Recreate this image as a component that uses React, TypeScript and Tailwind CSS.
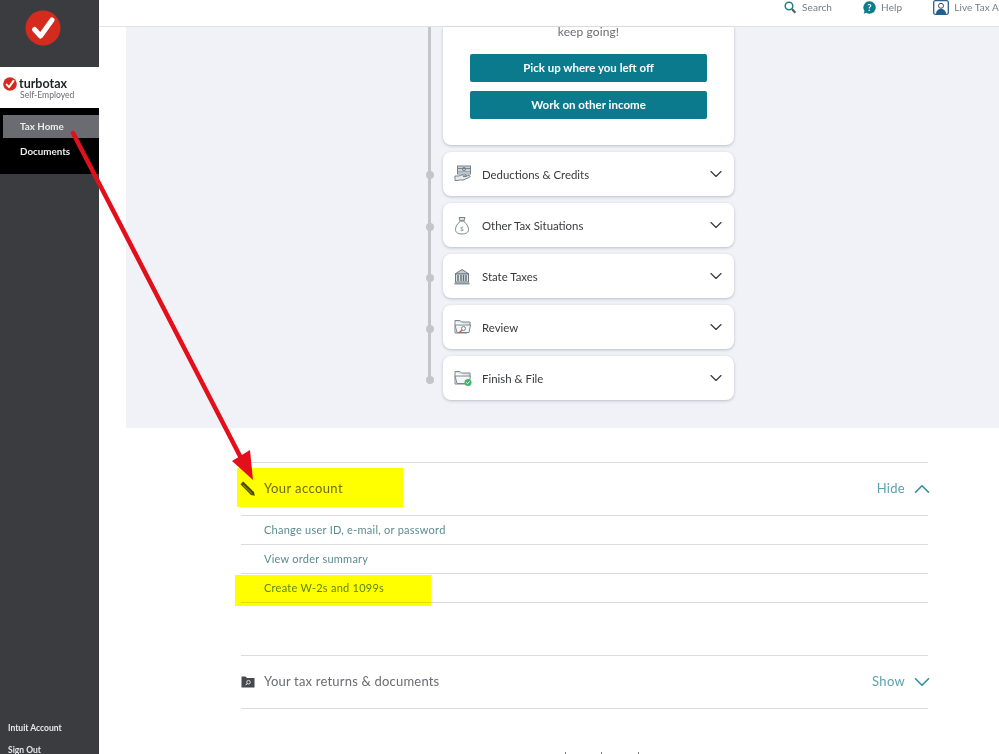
import { ChevronDown, ChevronUp } from 'lucide-react';
import type { ReactNode } from 'react';

const RED = '#d52b1f';

function Checkmark({ size }: { size: number }) {
  return (
    <svg width={size} height={size} viewBox="0 0 36 36" className="shrink-0">
      <circle cx="18" cy="18" r="17.5" fill={RED} />
      <path d="M9.5 19.5 L15.5 26 L27 10" fill="none" stroke="#fff" strokeWidth="5" strokeLinecap="round" strokeLinejoin="round" />
    </svg>
  );
}

function MoneyIcon() {
  return (
    <svg width="18" height="18" viewBox="0 0 18 18" fill="none" stroke="#76838c" strokeWidth="1">
      <rect x="3.5" y="1" width="13" height="6" fill="#c9d2d6" />
      <circle cx="10" cy="4" r="1.6" />
      <rect x="3.5" y="3.5" width="13" height="5.5" />
      <path d="M1 11h4l2-1h5c1 0 1 1.5 0 1.5H9l6-1c1.5 0 1.5 1.5 0 2l-6 2.5H5l-1 .5H1z" fill="#e6eaec" />
    </svg>
  );
}

function BagIcon() {
  return (
    <svg width="16" height="19" viewBox="0 0 16 19" fill="none" stroke="#76838c" strokeWidth="1">
      <path d="M5 1.5h6L9.8 5H6.2z" fill="#dbe2e4" />
      <path d="M5.5 5h5M6 5.5C3 8 1.5 11 1.5 13.5c0 3 2.5 4.5 6.500 4.5s6.500-1.500 6.500-4.500C14.500 11 13 8 10 5.500" fill="#ffffff" />
      <text x="8" y="15" fontSize="6.5" textAnchor="middle" stroke="none" fill="#5f8f85" fontFamily="Lato, sans-serif">$</text>
    </svg>
  );
}

function BankIcon() {
  return (
    <svg width="16" height="17" viewBox="0 0 16 17" fill="none" stroke="#6d7a83" strokeWidth="1">
      <path d="M1 6 8 1.5 15 6z" fill="#c3ccd0" />
      <rect x="1.5" y="6" width="13" height="8" fill="#dde3e6" />
      <path d="M4 7v6M7 7v6M9.5 7v6M12 7v6" strokeWidth="1.4" stroke="#5f6c75" />
      <path d="M0.5 15.5h15" strokeWidth="2" stroke="#8a969d" />
    </svg>
  );
}

function FolderIcon({ badge }: { badge: 'search' | 'check' }) {
  return (
    <svg width="18" height="16" viewBox="0 0 18 16" fill="none" stroke="#7b878f" strokeWidth="1">
      <path d="M1 3V1.500h5L7.500 3H16v3" fill="#dfe4e6" />
      <path d="M1 3v11h12" />
      <path d="M1 6h15.500L15 13.500H3z" fill="#f5f6f7" />
      {badge === 'search' ? (
        <>
          <circle cx="9.5" cy="9.5" r="2" />
          <path d="M8 11 5 14" stroke="#e0573f" strokeWidth="1.5" />
        </>
      ) : (
        <>
          <circle cx="14" cy="12.5" r="3.5" fill="#3fb56b" stroke="none" />
          <path d="M12.3 12.5l1.2 1.2 2.1-2.3" stroke="#fff" />
        </>
      )}
    </svg>
  );
}

function PencilIcon() {
  return (
    <svg width="15" height="15" viewBox="0 0 15 15" className="ml-[-1px] shrink-0">
      <path d="M3.2 0.5 14 11 14.8 14.8 11 14 0.5 3.2z" fill="#4a4a3a" />
      <path d="M3 3.8 11.8 12.3" stroke="#b9b96a" strokeWidth="0.8" />
    </svg>
  );
}

function DocsFolderIcon() {
  return (
    <svg width="14" height="12" viewBox="0 0 14 12" className="shrink-0">
      <path d="M0.5 0.5h4L6 2h7.5v9.500H.5z" fill="#46484c" />
      <circle cx="7.5" cy="6.2" r="1.8" fill="none" stroke="#fff" strokeWidth="0.8" />
      <path d="M6.2 7.5 4.5 9.2" stroke="#fff" strokeWidth="1" />
    </svg>
  );
}

function HeaderLink({ icon, label, className }: { icon: ReactNode; label: string; className: string }) {
  return (
    <div className={`flex items-center ${className}`}>
      {icon}
      <span className="text-[10px] tracking-[0.1px] text-[#737d84] whitespace-nowrap">{label}</span>
    </div>
  );
}

function StepRow({ icon, label, dotTop }: { icon: ReactNode; label: string; dotTop: string }) {
  return (
    <div className="relative flex h-[44px] items-center rounded-lg bg-white pl-[11px] pr-[8px] shadow-[0_1px_3px_rgba(60,70,90,0.3)]">
      <span className={`absolute left-[-17px] h-[8px] w-[8px] rounded-full bg-[#c3c5cc] ${dotTop}`} />
      <div className="flex w-[28px] shrink-0 items-center">{icon}</div>
      <span className="pt-[2px] text-[11.4px] text-[#393a3d]">{label}</span>
      <ChevronDown className="ml-auto text-[#393a3d]" size={20} strokeWidth={1.4} />
    </div>
  );
}

function AccountLink({ label }: { label: string }) {
  return (
    <div className="flex h-[29px] items-center border-b border-[#dcdcdc] pl-[23px] text-[11px] tracking-[0.25px] text-[#5b8a92]">
      {label}
    </div>
  );
}

export default function App() {
  return (
    <div className="relative flex h-[754px] w-[999px] overflow-hidden bg-white font-['Lato',sans-serif]">
      {/* Left nav */}
      <aside className="flex h-full w-[99px] shrink-0 flex-col bg-[#3a3c40]">
        <div className="flex h-[67px] items-start justify-center pt-[10px]">
          <div className="ml-[-13px]">
            <Checkmark size={36} />
          </div>
        </div>
        <div className="flex h-[41px] flex-col bg-white pl-[3px] pt-[10px]">
          <div className="flex items-center gap-[2px] leading-none">
            <Checkmark size={14} />
            <span className="text-[12.5px] font-bold leading-[14px] text-[#1f2124]">turbotax</span>
          </div>
          <span className="pl-[17px] text-[8.6px] leading-[9px] text-[#6b6c72]">Self-Employed</span>
        </div>
        <nav className="flex h-[66px] flex-col bg-black pl-[3px] pt-[7px] text-[9.8px] font-bold text-[#ececec]">
          <div className="flex h-[23px] items-center bg-[#6a6c71] pl-[17px]">Tax Home</div>
          <div className="flex h-[26px] items-center pl-[17px]">Documents</div>
        </nav>
        <div className="mt-auto flex translate-y-[2px] flex-col gap-[11px] pl-[8px] text-[8.5px] font-bold leading-[11px] text-[#e8e8e8]">
          <span>Intuit Account</span>
          <span>Sign Out</span>
        </div>
      </aside>

      <main className="flex min-w-0 flex-1 flex-col">
        {/* Top bar */}
        <header className="flex h-[27px] shrink-0 items-center border-b border-[#e2e2e4] bg-white pb-[11px]">
          <HeaderLink
            className="ml-[685px] gap-[6px]"
            label="Search"
            icon={
              <svg width="12" height="13" viewBox="0 0 12 13" fill="none" stroke="#1f7f8c">
                <circle cx="5" cy="5" r="3.8" strokeWidth="1.5" />
                <path d="M8 8l3.3 3.8" strokeWidth="2" stroke="#4b5a60" />
              </svg>
            }
          />
          <HeaderLink
            className="ml-[31px] gap-[5px]"
            label="Help"
            icon={
              <svg width="13" height="13" viewBox="0 0 13 13">
                <path d="M6.5 0.3a6.2 6.2 0 1 1-3.2 11.5L0.7 12.8l.8-2.7A6.2 6.2 0 0 1 6.5 0.3z" fill="#0e7c8a" />
                <text x="6.5" y="9.8" fontSize="9.5" fontWeight="700" textAnchor="middle" fill="#fff" fontFamily="Lato, sans-serif">?</text>
              </svg>
            }
          />
          <HeaderLink
            className="ml-[31px] gap-[5px]"
            label="Live Tax Advice"
            icon={
              <svg width="16" height="15" viewBox="0 0 16 15" className="shrink-0">
                <rect x="0.7" y="0.7" width="14.6" height="13.6" rx="1.5" fill="#fff" stroke="#2f5f8f" strokeWidth="1.3" />
                <circle cx="8" cy="5.8" r="2.5" fill="#fff" stroke="#39434a" />
                <path d="M3 14c0-3 2-5 5-5s5 2 5 5z" fill="#1f5f96" />
              </svg>
            }
          />
        </header>

        {/* Steps panel */}
        <section className="relative ml-[27px] h-[401px] shrink-0 bg-[#f0f2f7] pl-[317px]">
          <div className="absolute left-[302px] top-0 h-[353px] w-[3px] bg-[#c3c5cc]" />
          <div className="flex w-[291px] flex-col gap-[7px]">
            <div className="flex h-[118px] flex-col items-center rounded-b-lg bg-white px-[27px] shadow-[0_1px_3px_rgba(60,70,90,0.3)]">
              <p className="h-[27px] text-[12px] leading-[10px] tracking-[0.1px] text-[#6b6c72]">keep going!</p>
              <button className="h-[28px] w-full rounded-[2px] bg-[#0b7a8c] text-[11.5px] font-bold text-white">Pick up where you left off</button>
              <button className="mt-[9px] h-[28px] w-full rounded-[2px] bg-[#0b7a8c] text-[11.5px] font-bold text-white">Work on other income</button>
            </div>
            <StepRow icon={<MoneyIcon />} label="Deductions & Credits" dotTop="top-[19px]" />
            <StepRow icon={<BagIcon />} label="Other Tax Situations" dotTop="top-[20px]" />
            <StepRow icon={<BankIcon />} label="State Taxes" dotTop="top-[20px]" />
            <StepRow icon={<FolderIcon badge="search" />} label="Review" dotTop="top-[20px]" />
            <StepRow icon={<FolderIcon badge="check" />} label="Finish & File" dotTop="top-[20px]" />
          </div>
        </section>

        {/* Account sections */}
        <section className="ml-[142px] mt-[34px] w-[687px]">
          <div className="flex h-[54px] items-center gap-[9px] border-y border-[#dcdcdc] pb-[1px]">
            <PencilIcon />
            <span className="text-[13px] tracking-[0.4px] text-[#6b6c72]">Your account</span>
            <span className="ml-auto text-[13px] tracking-[0.3px] text-[#5ba3aa]">Hide</span>
            <ChevronUp className="ml-[-5px] mr-[-7px] text-[#2f8f99]" size={26} strokeWidth={1.5} />
          </div>
          <AccountLink label="Change user ID, e-mail, or password" />
          <AccountLink label="View order summary" />
          <AccountLink label="Create W-2s and 1099s" />

          <div className="mt-[52px] flex h-[54px] items-center gap-[9px] border-y border-[#dcdcdc] pb-[1px]">
            <DocsFolderIcon />
            <span className="text-[13px] tracking-[0.2px] text-[#6b6c72]">Your tax returns &amp; documents</span>
            <span className="ml-auto text-[13px] tracking-[0.3px] text-[#5ba3aa]">Show</span>
            <ChevronDown className="ml-[-5px] mr-[-7px] text-[#2f8f99]" size={26} strokeWidth={1.5} />
          </div>
          <div className="ml-[324px] mt-[43px] flex gap-[35px]">
            <span className="h-[2px] w-px bg-[#77797d]" />
            <span className="h-[2px] w-px bg-[#77797d]" />
            <span className="ml-[1px] h-[2px] w-px bg-[#77797d]" />
          </div>
        </section>
      </main>

      {/* Yellow highlighter marks and the red arrow drawn over the screenshot */}
      <div className="absolute left-[237px] top-[468px] h-[39px] w-[166px] bg-[#ffff00] mix-blend-multiply" />
      <div className="absolute left-[235px] top-[575px] h-[31px] w-[196px] bg-[#ffff00] mix-blend-multiply" />
      <svg className="pointer-events-none absolute left-0 top-0" width="999" height="754" viewBox="0 0 999 754">
        <path d="M73 133 L240 456" stroke="#e30f1a" strokeWidth="4.5" strokeLinecap="round" />
        <path d="M253 480 L232 461 L250 450 Z" fill="#e30f1a" />
      </svg>
    </div>
  );
}
